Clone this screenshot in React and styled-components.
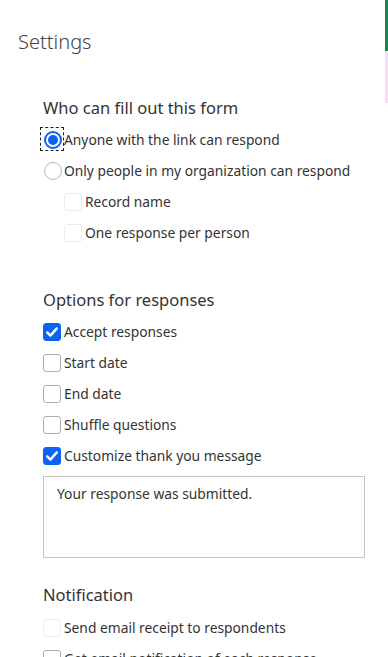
import React from "react";
import styled, { createGlobalStyle } from "styled-components";

const Global = createGlobalStyle`
  html, body { margin: 0; padding: 0; background: #fff; }
  body { font-family: "Noto Sans", "Open Sans", sans-serif; color: #333; overflow: hidden; }
`;

const Page = styled.div`
  position: relative;
  width: 388px;
  height: 657px;
  overflow: hidden;
  background: #fff;
`;

const Accent = styled.div`
  position: absolute;
  right: 0;
  top: 0;
  width: 3px;
  display: flex;
  flex-direction: column;
`;

const AccentPart = styled.div`
  height: ${(p) => p.$h}px;
  background: ${(p) => p.$c};
`;

const Title = styled.h1`
  margin: 0;
  padding: 28px 0 0 18px;
  font-size: 20px;
  font-weight: 300;
  line-height: 28px;
  color: #444;
`;

const Content = styled.div`
  padding: 40px 23px 0 43px;
  display: flex;
  flex-direction: column;
`;

const Section = styled.section`
  display: flex;
  flex-direction: column;
  margin-bottom: ${(p) => p.$mb || 0}px;
`;

const Heading = styled.h2`
  margin: 0 0 ${(p) => p.$mb ?? 4}px;
  font-size: 16.5px;
  font-weight: 400;
  line-height: 24px;
  color: #333;
`;

const Row = styled.label`
  display: flex;
  align-items: center;
  height: 31px;
  padding-left: ${(p) => (p.$indent ? 21 : 0)}px;
  font-size: 13.8px;
  color: #333;
  gap: ${(p) => p.$gap ?? 3}px;
`;

const RadioWrap = styled.span`
  position: relative;
  width: 19px;
  height: 19px;
  display: flex;
  align-items: center;
  justify-content: center;
  flex: none;
`;

const Radio = styled.span`
  box-sizing: border-box;
  width: 18px;
  height: 18px;
  border-radius: 50%;
  border: ${(p) => (p.$on ? "2px solid #0b63f6" : "1px solid #b8b8b8")};
  background: #fff;
  display: flex;
  align-items: center;
  justify-content: center;
  &::after {
    content: "";
    display: ${(p) => (p.$on ? "block" : "none")};
    width: 10px;
    height: 10px;
    border-radius: 50%;
    background: #0b63f6;
  }
`;

const FocusRing = styled.span`
  position: absolute;
  left: -3px;
  top: -3px;
  right: -2px;
  bottom: -2px;
  border: 1px dashed #222;
`;

const Box = styled.span`
  box-sizing: border-box;
  width: 18px;
  height: 18px;
  flex: none;
  border-radius: 3px;
  border: 1px solid ${(p) => (p.$on ? "#0b63f6" : p.$faint ? "#ececec" : "#b0b0b0")};
  background: ${(p) => (p.$on ? "#0b63f6" : "#fff")};
  display: flex;
  align-items: center;
  justify-content: center;
`;

const MessageBox = styled.div`
  box-sizing: border-box;
  height: 82px;
  width: 322px;
  margin-top: 5px;
  border: 1px solid #c4c4c0;
  padding: 7px 13px;
  font-size: 13.8px;
  line-height: 20px;
  color: #333;
`;

const Check = () => (
  <svg width="14" height="14" viewBox="0 0 14 14">
    <path d="M2.2 7.4 L5.4 10.6 L11.8 3.4" fill="none" stroke="#fff" strokeWidth="2.4" strokeLinecap="round" strokeLinejoin="round" />
  </svg>
);

const CheckRow = ({ on, faint, indent, children }) => (
  <Row $indent={indent}>
    <Box $on={on} $faint={faint}>{on && <Check />}</Box>
    <span>{children}</span>
  </Row>
);

export default function App() {
  return (
    <Page>
      <Global />
      <Accent>
        <AccentPart $h={51} $c="#0e8a52" />
        <AccentPart $h={52} $c="#fbdcf7" />
      </Accent>
      <Title>Settings</Title>
      <Content>
        <Section $mb={40}>
          <Heading>Who can fill out this form</Heading>
          <Row $gap={2}>
            <RadioWrap>
              <Radio $on />
              <FocusRing />
            </RadioWrap>
            <span>Anyone with the link can respond</span>
          </Row>
          <Row $gap={2}>
            <RadioWrap>
              <Radio />
            </RadioWrap>
            <span>Only people in my organization can respond</span>
          </Row>
          <CheckRow indent faint>Record name</CheckRow>
          <CheckRow indent faint>One response per person</CheckRow>
        </Section>
        <Section $mb={25}>
          <Heading>Options for responses</Heading>
          <CheckRow on>Accept responses</CheckRow>
          <CheckRow>Start date</CheckRow>
          <CheckRow>End date</CheckRow>
          <CheckRow>Shuffle questions</CheckRow>
          <CheckRow on>Customize thank you message</CheckRow>
          <MessageBox>Your response was submitted.</MessageBox>
        </Section>
        <Section>
          <Heading $mb={5}>Notification</Heading>
          <CheckRow faint>Send email receipt to respondents</CheckRow>
          <CheckRow>Get email notification of each response</CheckRow>
        </Section>
      </Content>
    </Page>
  );
}
